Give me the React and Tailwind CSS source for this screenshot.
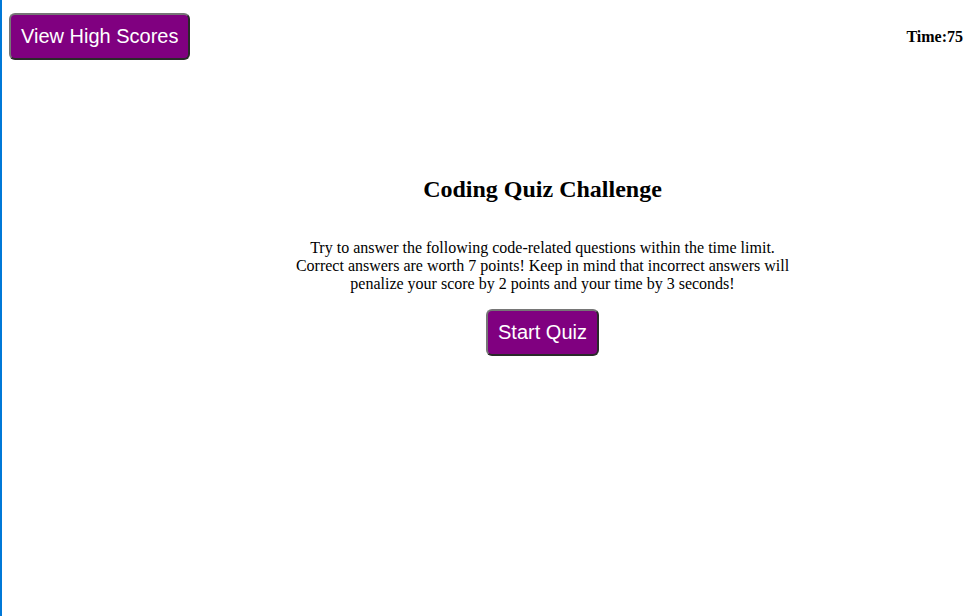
import React from "react";

function PurpleButton({ children }) {
  return (
    <button className="rounded-[6px] border-2 border-t-[#767676] border-l-[#767676] border-r-[#2a2a2a] border-b-[#2a2a2a] bg-[#800080] px-[10px] py-[10px] text-[20px] leading-[23px] text-white font-['Liberation_Sans',Arial,sans-serif]">
      {children}
    </button>
  );
}

export default function App() {
  return (
    <div className="min-h-[616px] border-l-2 border-[#0078d7] bg-white text-black font-['Liberation_Serif','Times_New_Roman',serif]">
      <header className="flex items-center justify-between pl-[7px] pr-[4px] pt-[13px]">
        <PurpleButton>View High Scores</PurpleButton>
        <div className="text-[16px] font-bold">Time:75</div>
      </header>

      <main className="pl-[116px] text-center">
        <h2 className="mt-[115px] text-[24px] font-bold leading-[28px]">Coding Quiz Challenge</h2>
        <p className="mx-auto mt-[36px] max-w-[500px] text-[16px] leading-[18px]">
          Try to answer the following code-related questions within the time limit. Correct answers are worth 7
          points! Keep in mind that incorrect answers will penalize your score by 2 points and your time by 3
          seconds!
        </p>
        <div className="mt-[16px]">
          <PurpleButton>Start Quiz</PurpleButton>
        </div>
      </main>
    </div>
  );
}
